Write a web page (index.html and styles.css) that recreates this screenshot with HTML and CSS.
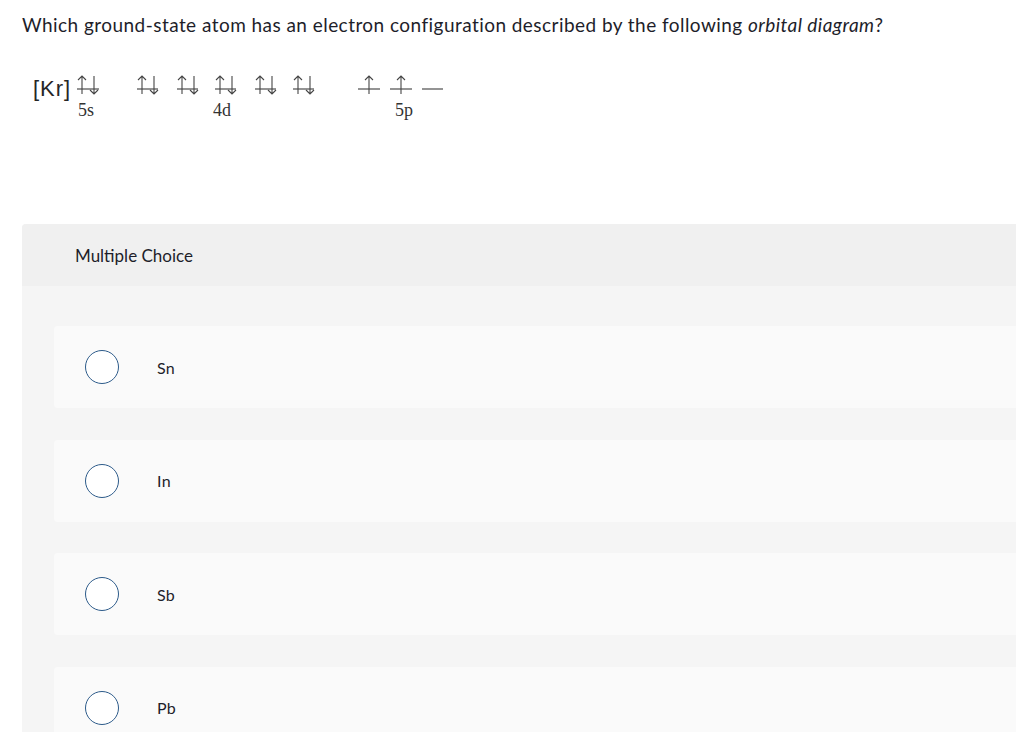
FILE: index.html
```html
<!DOCTYPE html>
<html>
<head>
<meta charset="utf-8">
<link rel="stylesheet" href="styles.css">
</head>
<body>
<div class="page">
  <p class="question">Which ground-state atom has an electron configuration described by the following <em>orbital diagram</em>?</p>
  <svg class="diagram" width="440" height="60" viewBox="0 0 440 60">
    <g class="lines" stroke="#5a5a5a" stroke-width="1.3" fill="none">
      <line x1="55" y1="27" x2="77" y2="27"/>
      <line x1="115" y1="27" x2="136" y2="27"/>
      <line x1="155" y1="27" x2="176" y2="27"/>
      <line x1="193" y1="27" x2="214" y2="27"/>
      <line x1="233" y1="27" x2="254" y2="27"/>
      <line x1="271" y1="27" x2="292" y2="27"/>
      <line x1="336" y1="27" x2="358" y2="27"/>
      <line x1="368" y1="27" x2="390" y2="27"/>
      <line x1="400" y1="27" x2="421" y2="27"/>
    </g>
    <g stroke="#454545" stroke-width="1.1" fill="none">
      <path id="pair" d="M60 32V14M56 18L60 14L64 18M72 14V32M68 28L72 32L76 28"/>
      <use href="#pair" x="60"/>
      <use href="#pair" x="100"/>
      <use href="#pair" x="138"/>
      <use href="#pair" x="178"/>
      <use href="#pair" x="216"/>
      <path id="up" d="M347 32V14M343 18L347 14L351 18"/>
      <use href="#up" x="32"/>
    </g>
    <text class="kr" x="11" y="34">[Kr]</text>
    <text class="lbl" x="56" y="54">5s</text>
    <text class="lbl" x="191" y="54">4d</text>
    <text class="lbl" x="373" y="54">5p</text>
  </svg>

  <section class="panel">
    <div class="panel-head">Multiple Choice</div>
    <div class="choices">
      <label class="choice"><span class="radio"></span><span class="choice-text">Sn</span></label>
      <label class="choice"><span class="radio"></span><span class="choice-text">In</span></label>
      <label class="choice"><span class="radio"></span><span class="choice-text">Sb</span></label>
      <label class="choice"><span class="radio"></span><span class="choice-text">Pb</span></label>
    </div>
  </section>
</div>
</body>
</html>
```

FILE: styles.css
```css
html, body {
  margin: 0;
  padding: 0;
  background: #ffffff;
  overflow: hidden;
}
body {
  font-family: Lato, "Open Sans", sans-serif;
  color: #1e1e2a;
}
.page {
  padding: 13px 0 0 22px;
}
.question {
  margin: 0;
  font-size: 19px;
  line-height: 24px;
  letter-spacing: 0.45px;
}
.question em {
  font-style: italic;
}
.diagram {
  display: block;
  margin-top: 25px;
}
.kr {
  font-family: "Liberation Sans", sans-serif;
  font-size: 22px;
  letter-spacing: 1px;
  fill: #262626;
}
.lbl {
  font-family: "Liberation Serif", serif;
  font-size: 18px;
  fill: #333;
}
.panel {
  margin-top: 102px;
  margin-right: -12px;
  background: #f5f5f5;
  border-radius: 4px;
  overflow: hidden;
}
.panel-head {
  height: 62px;
  background: #f0f0f0;
  display: flex;
  align-items: center;
  padding-left: 53px;
  font-size: 17px;
}
.choices {
  display: flex;
  flex-direction: column;
  gap: 31.5px;
  padding: 40px 0 40px 32px;
}
.choice {
  height: 82px;
  background: #fafafa;
  border-radius: 4px;
  display: flex;
  align-items: center;
  padding-left: 31px;
}
.radio {
  width: 32px;
  height: 32px;
  border: 1.5px solid #2d5b8a;
  border-radius: 50%;
  background: #fff;
  flex: none;
}
.choice-text {
  margin-left: 38px;
  font-size: 16px;
  letter-spacing: 0.3px;
}
```
